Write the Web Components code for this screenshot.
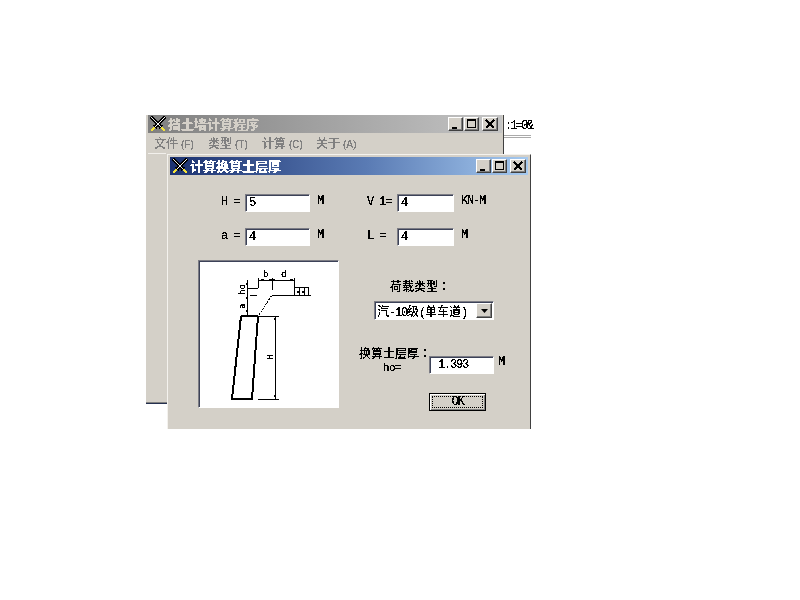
<!DOCTYPE html>
<html>
<head>
<meta charset="utf-8">
<style>
  html, body { margin: 0; height: 100%; background: #fff; overflow: hidden; }
  body { position: relative; font-family: "Noto Sans CJK SC", "Liberation Sans", sans-serif; }
</style>
</head>
<body>

<back-sliver></back-sliver>

<app-window style="left:146px;top:115px;width:357px;height:289px">
  <title-bar heading="挡土墙计算程序" style="--bar-pad:2px 4px 2px 2px"></title-bar>
  <menu-bar></menu-bar>
</app-window>

<calc-dialog style="left:167px;top:154px;width:364px;height:275px">
  <title-bar heading="计算换算土层厚"></title-bar>
  <div style="padding:19px 0 0 51px;display:flex">
    <form-field label="H =" value="5" unit="M" style="--lw:24px;--iw:65px;--uw:57px"></form-field>
    <form-field label="V 1=" value="4" unit="KN-M" style="--lw:30px;--iw:57px;--uw:40px"></form-field>
  </div>
  <div style="padding:16px 0 0 51px;display:flex">
    <form-field label="a =" value="4" unit="M" style="--lw:24px;--iw:65px;--uw:57px"></form-field>
    <form-field label="L =" value="4" unit="M" style="--lw:30px;--iw:57px;--uw:40px"></form-field>
  </div>
  <div style="padding:14px 0 0 28px;display:flex">
    <wall-diagram></wall-diagram>
    <result-panel></result-panel>
  </div>
</calc-dialog>

<script>
// the original text has no antialiasing, so cut the alpha to on/off
const pxDefs = `
<svg width="0" height="0" style="position:absolute">
  <filter id="px" x="-20%" y="-20%" width="140%" height="140%" color-interpolation-filters="sRGB">
    <feComponentTransfer><feFuncA type="discrete" tableValues="0 1 1"/></feComponentTransfer>
  </filter>
</svg>`;

// Latin text of the original is 6px wide per char but tall
const latinCss = `font: 12px/14px "Liberation Mono", monospace; letter-spacing: -1.2px;`;

const swordIcon = `
<svg width="17" height="16" viewBox="0 0 17 16" shape-rendering="crispEdges" style="flex:none">
  <path d="M1 1L11 11" stroke="#000" stroke-width="3" fill="none"/>
  <path d="M15 1L5 11" stroke="#000" stroke-width="3" fill="none"/>
  <path d="M1 1L11 11" stroke="#e8e8e8" stroke-width="1.2" fill="none"/>
  <path d="M15 1L5 11" stroke="#fff" stroke-width="1.2" fill="none"/>
  <path d="M11 11L15 15" stroke="#f2e23a" stroke-width="2.4" fill="none"/>
  <path d="M5 11L1 15" stroke="#f2e23a" stroke-width="2.4" fill="none"/>
  <path d="M3 9L7 13M13 9L9 13" stroke="#000" stroke-width="1.4" fill="none"/>
</svg>`;

class CaptionButton extends HTMLElement {
  constructor() {
    super();
    const glyphs = {
      min: '<path d="M3 9h6v2H3z" fill="#000"/>',
      max: '<path d="M2 1h10v9H2zM3 3v6h8V3z" fill="#000" fill-rule="evenodd"/>',
      close: '<path d="M3 2l8 8M11 2l-8 8" stroke="#000" stroke-width="2" fill="none"/>'
    };
    this.attachShadow({mode: "open"}).innerHTML = `
      <style>
        :host {
          display: flex; align-items: center; justify-content: center;
          box-sizing: border-box; flex: none; height: 100%;
          background: #d4d0c8;
          border: 1px solid; border-color: #fff #404040 #404040 #fff;
          box-shadow: inset -1px -1px #808080;
        }
      </style>
      <svg width="14" height="12" viewBox="0 0 14 12" shape-rendering="crispEdges">${glyphs[this.getAttribute("kind")]}</svg>`;
  }
}
customElements.define("caption-button", CaptionButton);

class TitleBar extends HTMLElement {
  constructor() {
    super();
    this.attachShadow({mode: "open"}).innerHTML = `
      ${pxDefs}
      <style>
        :host {
          display: flex; align-items: center; box-sizing: border-box;
          height: 18px; padding: var(--bar-pad, 2px);
          background: var(--bar-bg, linear-gradient(90deg, #1c3270 0%, #5a7bb4 55%, #a6caf0 100%));
          color: var(--bar-fg, #fff);
          font: bold 13px/14px "Noto Sans CJK SC", sans-serif;
        }
        .icon { display: flex; margin-right: 1px; }
        .heading { flex: 1; white-space: nowrap; }
        .heading span { display: inline-block; filter: url(#px); }
        .btns { display: flex; height: 100%; }
        caption-button { width: 15px; margin-left: 1px; }
        caption-button[kind=close] { width: 16px; margin-left: 3px; }
      </style>
      <span class="icon">${swordIcon}</span>
      <span class="heading"><span>${this.getAttribute("heading")}</span></span>
      <span class="btns">
        <caption-button kind="min"></caption-button>
        <caption-button kind="max"></caption-button>
        <caption-button kind="close"></caption-button>
      </span>`;
  }
}
customElements.define("title-bar", TitleBar);

class MenuBar extends HTMLElement {
  constructor() {
    super();
    const items = [["文件", "F"], ["类型", "T"], ["计算", "C"], ["关于", "A"]];
    this.attachShadow({mode: "open"}).innerHTML = `
      ${pxDefs}
      <style>
        :host { display: flex; height: 20px; padding-left: 6px; align-items: center;
                color: #808080; font: 12px/16px "Noto Sans CJK SC", sans-serif; }
        span { width: 54px; white-space: nowrap; flex: none; filter: url(#px); }
        i { font: 10px "Liberation Sans", sans-serif; margin-left: 3px; }
      </style>
      ${items.map(([t, k]) => `<span>${t}<i>(${k})</i></span>`).join("")}`;
  }
}
customElements.define("menu-bar", MenuBar);

class AppWindow extends HTMLElement {
  constructor() {
    super();
    this.attachShadow({mode: "open"}).innerHTML = `
      <style>
        :host {
          position: absolute; box-sizing: border-box; display: block;
          background: #d4d0c8; padding: 0 1px 0 2px;
          border-bottom: 1px solid #24304f;
          box-shadow: inset 0 -1px #808080;
          --bar-bg: linear-gradient(90deg, #808080, #c4c4c4);
          --bar-fg: #d4d0c8;
        }
        .line { height: 1px; width: 18px; background: #f2f0ec; }
      </style>
      <slot></slot><div class="line"></div>`;
  }
}
customElements.define("app-window", AppWindow);

class BackSliver extends HTMLElement {
  constructor() {
    super();
    this.attachShadow({mode: "open"}).innerHTML = `
      ${pxDefs}
      <style>
        :host {
          position: absolute; left: 503px; top: 115px; width: 28px; height: 39px;
          box-sizing: border-box; background: #fff;
          border-left: 1px solid #404040;
          font: 12px/14px "Liberation Mono", monospace; color: #000;
        }
        .t { padding: 4px 0 0 1px; height: 16px; white-space: nowrap; letter-spacing: -1.8px; }
        .t span { display: inline-block; filter: url(#px); }
        .r { height: 3px; border: solid #aaa; border-width: 1px 0; box-sizing: border-box; }
      </style>
      <div class="t"><span>:1=0&amp;</span></div><div class="r"></div>`;
  }
}
customElements.define("back-sliver", BackSliver);

class CalcDialog extends HTMLElement {
  constructor() {
    super();
    this.attachShadow({mode: "open"}).innerHTML = `
      <style>
        :host {
          position: absolute; display: block; box-sizing: border-box;
          background: #d4d0c8; padding: 2px 2px 0 2px;
          border: solid; border-width: 1px 1px 0 1px;
          border-color: #f4f2ee #404040 #000 #f4f2ee;
        }
      </style>
      <slot></slot>`;
  }
}
customElements.define("calc-dialog", CalcDialog);

const sunkenCss = `
  box-sizing: border-box; background: #fff;
  border: 1px solid; border-color: #7c7c84 #fff #fff #7c7c84;
  box-shadow: inset 1px 1px #3c4258;
`;

class FormField extends HTMLElement {
  constructor() {
    super();
    this.attachShadow({mode: "open"}).innerHTML = `
      ${pxDefs}
      <style>
        :host { display: flex; align-items: center; height: 18px; color: #000; ${latinCss} }
        .l { width: var(--lw); flex: none; white-space: pre; padding-bottom: 2px; }
        .i { width: var(--iw); height: 18px; flex: none; padding: 2px 0 0 3px; letter-spacing: 0;
             font: 12px/13px "Liberation Mono", monospace; ${sunkenCss} }
        .u { width: var(--uw); flex: none; box-sizing: border-box; padding: 0 0 4px 7px; }
        b { font-weight: normal; display: inline-block; filter: url(#px); }
      </style>
      <span class="l"><b>${this.getAttribute("label")}</b></span>
      <span class="i"><b>${this.getAttribute("value")}</b></span>
      <span class="u"><b>${this.getAttribute("unit")}</b></span>`;
  }
}
customElements.define("form-field", FormField);

class WallDiagram extends HTMLElement {
  constructor() {
    super();
    this.attachShadow({mode: "open"}).innerHTML = `
      ${pxDefs}
      <style>
        :host { display: block; flex: none; width: 141px; height: 148px; box-sizing: border-box; ${sunkenCss} }
        svg { display: block; }
        text { font: 9px "Liberation Mono", monospace; fill: #000; filter: url(#px); }
      </style>
      <svg width="139" height="146" viewBox="1 1 139 146">
        <g fill="none" stroke="#000" shape-rendering="crispEdges">
          <path d="M43 56H60M43 56L34 139H54L60 56" stroke-width="2"/>
          <path d="M60 56H81M60 139H81M77 56V139"/>
          <path d="M74 35H113M96 27H110V35M96 18V35M101 27V35M106 27V35M60 18V28M74 18V30"/>
          <path d="M60 20H96M49 20V55M49 28H60M52 35H59"/>
        </g>
        <path d="M61 55L74 35" stroke="#000" stroke-dasharray="2 1" shape-rendering="crispEdges"/>
        <g fill="#000">
          <rect x="48" y="23" width="2" height="2"/><rect x="48" y="37" width="2" height="2"/>
          <rect x="48" y="50" width="2" height="2"/><rect x="76" y="58" width="2" height="2"/>
          <rect x="76" y="135" width="2" height="2"/><rect x="63" y="19" width="3" height="2"/>
          <rect x="71" y="19" width="3" height="2"/><rect x="75" y="19" width="2" height="2"/>
          <rect x="92" y="19" width="3" height="2"/><rect x="99" y="31" width="2" height="2"/>
          <rect x="104" y="31" width="2" height="2"/>
        </g>
        <text x="65" y="17">b</text>
        <text x="83" y="17">d</text>
        <text transform="translate(47 35) rotate(-90)">ho</text>
        <text transform="translate(47 49) rotate(-90)">a</text>
        <text transform="translate(75 100) rotate(-90)">H</text>
      </svg>`;
  }
}
customElements.define("wall-diagram", WallDiagram);

class ResultPanel extends HTMLElement {
  constructor() {
    super();
    this.attachShadow({mode: "open"}).innerHTML = `
      ${pxDefs}
      <style>
        :host { display: block; flex: none; width: 188px; color: #000;
                font: 12px/16px "Noto Sans CJK SC", sans-serif; }
        .kind { margin: 18px 0 0 51px; height: 16px; white-space: nowrap; }
        u { text-decoration: none; font-family: "Noto Sans CJK TC", sans-serif; }
        m { ${latinCss} }
        .kind span, .cap span, .select span span, .out span, .u span, .ok b {
          display: inline-block; filter: url(#px); font-weight: normal; }
        .select { display: flex; margin: 7px 0 0 35px; width: 120px; height: 19px; padding: 1px 1px 1px 2px; ${sunkenCss} }
        .select > span { flex: 1; white-space: nowrap; line-height: 16px; }
        .arrow { flex: none; width: 16px; box-sizing: border-box; background: #d4d0c8; display: flex;
                 align-items: center; justify-content: center;
                 border: 1px solid; border-color: #fff #404040 #404040 #fff;
                 box-shadow: inset -1px -1px #808080; }
        .arrow svg { display: block; }
        .result { display: flex; margin: 25px 0 0 20px; height: 29px; }
        .cap { width: 70px; flex: none; white-space: nowrap; line-height: 15px; }
        .cap span { vertical-align: top; }
        .cap div { font: 11px/10px "Liberation Mono", monospace; letter-spacing: -0.6px; padding: 3px 0 0 24px; }
        .out { width: 65px; height: 18px; flex: none; margin-top: 11px; padding: 1px 0 0 8px; ${latinCss} ${sunkenCss} }
        .u { ${latinCss} margin: 10px 0 0 4px; }
        .ok { margin: 19px 0 0 90px; width: 57px; height: 18px; box-sizing: border-box; background: #d4d0c8;
              border: 1px solid #000; box-shadow: inset 1px 1px #fff, inset -1px -1px #808080;
              padding: 2px; display: flex; }
        .ok span { flex: 1; border: 1px dotted #000; ${latinCss} line-height: 11px; text-align: center; }
      </style>
      <div class="kind"><span>荷载类型<u>：</u></span></div>
      <div class="select">
        <span><span>汽<m>-10</m>级<m>(</m>单车道<m>)</m></span></span>
        <div class="arrow"><svg width="7" height="4" viewBox="0 0 7 4"><path d="M0 0H7L3.5 4z" fill="#000"/></svg></div>
      </div>
      <div class="result">
        <div class="cap"><span>换算土层厚<u>：</u></span><div><span>ho=</span></div></div>
        <div class="out"><span>1.393</span></div>
        <div class="u"><span>M</span></div>
      </div>
      <div class="ok"><span><b>OK</b></span></div>`;
  }
}
customElements.define("result-panel", ResultPanel);
</script>
</body>
</html>
